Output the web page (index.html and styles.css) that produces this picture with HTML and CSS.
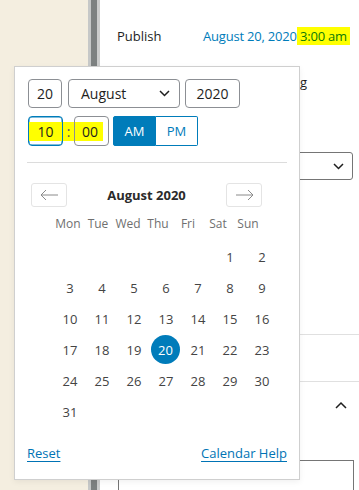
FILE: index.html
```html
<!DOCTYPE html>
<html>
<head>
<meta charset="utf-8">
<link rel="stylesheet" href="styles.css">
</head>
<body>
<div class="bg"></div>
<div class="strip"></div>
<div class="panel">
  <div class="row-publish">
    <span class="label">Publish</span>
    <span class="value">August 20, 2020<span class="hl-link"> 3:00 am</span></span>
  </div>
  <div class="row-stick"><span class="stick-text">g</span></div>
  <div class="author-select">
    <span>admin</span>
    <svg class="chev" width="11" height="7" viewBox="0 0 11 7"><path d="M1 1 L5.5 5.5 L10 1" fill="none" stroke="#1e1e1e" stroke-width="1.5"/></svg>
  </div>
  <div class="section sec1"></div>
  <div class="section sec2">
    <svg class="chev-up" width="12" height="8" viewBox="0 0 12 8"><path d="M1 7 L6 2 L11 7" fill="none" stroke="#1e1e1e" stroke-width="1.5"/></svg>
  </div>
  <div class="bottom-box"></div>
</div>

<div class="popover">
  <div class="date-row">
    <div class="field day">20</div>
    <div class="field month">
      <span>August</span>
      <svg width="11" height="7" viewBox="0 0 11 7"><path d="M1 1 L5.5 5.5 L10 1" fill="none" stroke="#1e1e1e" stroke-width="1.5"/></svg>
    </div>
    <div class="field year">2020</div>
  </div>
  <div class="time-row">
    <div class="field hour focus"><span class="hl hl-hour">10</span></div>
    <div class="colon"><span class="hl hl-colon">:</span></div>
    <div class="field minute"><span class="hl hl-min">00</span></div>
    <div class="ampm">
      <div class="btn am">AM</div>
      <div class="btn pm">PM</div>
    </div>
  </div>
  <div class="sep"></div>
  <div class="cal-head">
    <div class="nav">
      <svg width="19" height="12" viewBox="0 0 19 12"><path d="M1 6 H18 M1 6 L6 1 M1 6 L6 11" fill="none" stroke="#8a8a8a" stroke-width="1"/></svg>
    </div>
    <div class="title">August 2020</div>
    <div class="nav">
      <svg width="19" height="12" viewBox="0 0 19 12"><path d="M1 6 H18 M18 6 L13 1 M18 6 L13 11" fill="none" stroke="#8a8a8a" stroke-width="1"/></svg>
    </div>
  </div>
  <div class="weekdays">
    <span>Mon</span><span>Tue</span><span>Wed</span><span>Thu</span><span>Fri</span><span>Sat</span><span>Sun</span>
  </div>
  <div class="days">
    <span></span><span></span><span></span><span></span><span></span><span>1</span><span>2</span>
    <span>3</span><span>4</span><span>5</span><span>6</span><span>7</span><span>8</span><span>9</span>
    <span>10</span><span>11</span><span>12</span><span>13</span><span>14</span><span>15</span><span>16</span>
    <span>17</span><span>18</span><span>19</span><span class="sel">20</span><span>21</span><span>22</span><span>23</span>
    <span>24</span><span>25</span><span>26</span><span>27</span><span>28</span><span>29</span><span>30</span>
    <span>31</span>
  </div>
  <div class="foot">
    <a class="link">Reset</a>
    <a class="link">Calendar Help</a>
  </div>
</div>
</body>
</html>
```

FILE: styles.css
```css
* { box-sizing: border-box; }
html, body { margin: 0; padding: 0; }
body {
  width: 359px;
  height: 490px;
  overflow: hidden;
  display: flex;
  position: relative;
  font-family: "Open Sans", "Noto Sans", sans-serif;
  color: #1e1e1e;
  background: #f4eee0;
}
.bg { width: 88px; flex-shrink: 0; background: #f4eee0; }
.strip {
  width: 12px;
  flex-shrink: 0;
  background: #7d8181;
  border-left: 3px solid #c6c8c8;
  border-right: 3px solid #cbcccc;
}
.panel {
  flex: 1;
  min-width: 0;
  background: #fff;
  position: relative;
  font-size: 13px;
}
.row-publish {
  display: flex;
  padding: 27px 0 0 17px;
  height: 45px;
  line-height: 18px;
  white-space: nowrap;
}
.label { width: 86px; flex-shrink: 0; }
.value { color: #007cba; white-space: nowrap; letter-spacing: -0.2px; }
.hl-link { background: #ffff00; color: #0b7a08; padding: 0 3px 0 0; }
.row-stick {
  margin: 28px 0 0 200px;
  height: 19px;
  line-height: 18px;
  white-space: nowrap;
}
.author-select {
  margin: 60px 6px 0 17px;
  height: 28px;
  border: 1px solid #757575;
  border-radius: 3px;
  display: flex;
  align-items: center;
  justify-content: space-between;
  padding: 0 8px 0 10px;
}
.section { border-top: 1px solid #e0e0e0; }
.sec1 { margin-top: 154px; height: 47px; }
.sec2 { height: 79px; display: flex; justify-content: flex-end; padding: 19px 12px 0 0; }
.chev-up { display: block; }
.bottom-box {
  margin-left: 18px;
  width: 236px;
  height: 40px;
  border: 1px solid #757575;
  border-bottom: none;
}

.popover {
  position: absolute;
  left: 14px;
  top: 66px;
  width: 286px;
  height: 414px;
  background: #fff;
  border: 1px solid #cfcfcf;
  box-shadow: 0 2px 6px rgba(0,0,0,0.06);
  padding: 12px 12px 0 13px;
}
.date-row { display: flex; height: 29px; }
.field {
  height: 100%;
  border: 1px solid #8c8f94;
  border-radius: 4px;
  display: flex;
  align-items: center;
  justify-content: center;
  font-size: 14px;
  color: #1e1e1e;
}
.day { width: 34px; }
.month { width: 112px; margin-left: 6px; justify-content: space-between; padding: 0 9px 0 12px; }
.month svg { display: block; }
.year { width: 55px; margin-left: 5px; }
.time-row { display: flex; height: 30px; margin-top: 8px; }
.hour { width: 35px; }
.focus { border: 1.5px solid #007cba; box-shadow: inset 0 0 0 0.5px #007cba; }
.minute { width: 35px; justify-content: flex-start; padding-left: 0; }
.colon { width: 11px; display: flex; align-items: center; font-size: 14px; }
.hl { background: #ffff00; line-height: 19px; height: 19px; display: block; }
.hl-hour { width: 33px; text-align: center; }
.hl-colon { width: 11px; text-align: center; color: #555; }
.hl-min { width: 28px; text-align: center; padding-left: 2px; }
.ampm { display: flex; margin-left: 4px; height: 30px; }
.btn {
  display: flex; align-items: center; justify-content: center;
  font-size: 13px;
  border: 1px solid #007cba;
}
.am { width: 43px; background: #007cba; color: #fff; border-radius: 2px 0 0 2px; }
.pm { width: 42px; color: #007cba; border-left: none; border-radius: 0 2px 2px 0; }
.sep { margin: 16px 0 0 -1px; width: 260px; border-top: 1px solid #dcdcdc; }
.cal-head { display: flex; align-items: center; height: 24px; margin-top: 20px; padding: 0 25px 0 3px; }
.nav {
  width: 36px; height: 24px;
  border: 1px solid #e4e4e4;
  border-radius: 3px;
  display: flex; align-items: center; justify-content: center;
}
.nav svg { display: block; }
.title { flex: 1; text-align: center; font-weight: 700; font-size: 13px; color: #2b2b2b; }
.weekdays {
  display: grid;
  grid-template-columns: repeat(7, 30px);
  margin: 9px 0 0 25px;
  height: 16px;
  line-height: 16px;
  font-size: 12px;
  color: #6f6f6f;
  text-align: center;
}
.days {
  display: grid;
  grid-template-columns: repeat(7, 32px);
  grid-auto-rows: 31px;
  margin: 9px 0 0 26px;
  font-size: 13px;
  color: #444;
  text-align: center;
}
.days span { display: flex; align-items: center; justify-content: center; }
.days .sel {
  background: #007cba;
  color: #fff;
  border-radius: 50%;
  width: 29px;
  height: 29px;
  margin: 1px 0 0 1px;
}
.foot {
  display: flex;
  justify-content: space-between;
  margin: 17px 0 0 -1px;
  width: 260px;
  line-height: 18px;
  font-size: 13px;
}
.link { color: #0073b5; text-decoration: underline; text-underline-offset: 3px; }
```
